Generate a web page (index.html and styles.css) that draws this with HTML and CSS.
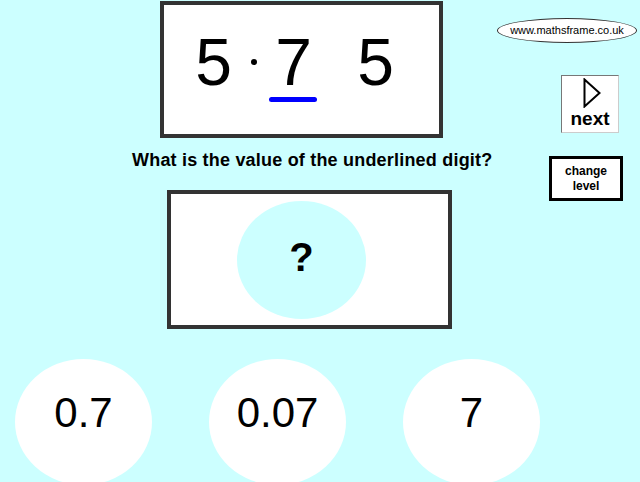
FILE: index.html
```html
<!DOCTYPE html>
<html>
<head>
<meta charset="utf-8">
<link rel="stylesheet" href="styles.css">
</head>
<body>
<div class="page">
  <div class="main">
    <div class="number-box">
      <span class="digit">5</span>
      <span class="point"><span class="dot"></span></span>
      <span class="digit underlined">7</span>
      <span class="space"></span>
      <span class="digit">5</span>
    </div>
    <div class="question">What is the value of the underlined digit?</div>
    <div class="answer-box">
      <div class="answer-bubble">?</div>
    </div>
  </div>
  <div class="side">
    <div class="site">www.mathsframe.co.uk</div>
    <div class="next">
      <svg class="next-icon" width="18" height="30" viewBox="0 0 18 30">
        <path d="M1.5 1.5 L16.5 15 L1.5 28.5 Z" fill="none" stroke="#000" stroke-width="2" stroke-linejoin="miter"/>
      </svg>
      <span class="next-label">next</span>
    </div>
    <div class="change">change<br>level</div>
  </div>
  <div class="choices">
    <div class="choice">0.7</div>
    <div class="choice">0.07</div>
    <div class="choice">7</div>
  </div>
</div>
</body>
</html>
```
FILE: styles.css
```css
html, body {
  margin: 0;
  padding: 0;
  height: 482px;
  overflow: hidden;
  background: #ccffff;
  font-family: "Liberation Sans", Arial, sans-serif;
  color: #000;
}

.page {
  display: grid;
  grid-template-columns: 497px 143px;
  grid-template-rows: auto auto;
}

.main {
  display: flex;
  flex-direction: column;
  align-items: flex-start;
}

.number-box {
  box-sizing: border-box;
  margin: 1px 0 0 160px;
  width: 283px;
  height: 137px;
  border: 4px solid #333;
  background: #fff;
  display: flex;
  align-items: flex-start;
  padding: 24px 0 0 31px;
  font-size: 66px;
  line-height: 66px;
}

.digit {
  display: block;
  width: 37px;
  text-align: center;
  position: relative;
}

.underlined::after {
  content: "";
  position: absolute;
  left: -6px;
  top: 68px;
  width: 48px;
  height: 5px;
  border-radius: 3px;
  background: #0000ff;
}

.point {
  display: block;
  width: 43px;
  height: 66px;
  position: relative;
}

.dot {
  position: absolute;
  left: 19px;
  top: 30px;
  width: 6px;
  height: 6px;
  border-radius: 50%;
  background: #000;
}

.space {
  display: block;
  width: 45px;
}

.question {
  margin: 12px 0 0 132px;
  font-size: 18px;
  letter-spacing: 0.2px;
  font-weight: bold;
  line-height: 20px;
  white-space: nowrap;
}

.answer-box {
  box-sizing: border-box;
  margin: 20px 0 0 167px;
  width: 285px;
  height: 139px;
  border: 4px solid #333;
  background: #fff;
  padding: 7px 0 0 66px;
}

.answer-bubble {
  width: 129px;
  height: 118px;
  border-radius: 50%;
  background: #ccffff;
  display: flex;
  align-items: center;
  justify-content: center;
  box-sizing: border-box;
  padding-bottom: 6px;
  font-size: 40px;
  font-weight: bold;
  line-height: 40px;
}

.side {
  display: flex;
  flex-direction: column;
  align-items: flex-start;
}

.site {
  box-sizing: border-box;
  margin-top: 18px;
  width: 140px;
  height: 25px;
  border: 1px solid #333;
  border-radius: 50%;
  background: #fff;
  font-size: 11px;
  line-height: 23px;
  text-align: center;
}

.next {
  box-sizing: border-box;
  margin: 32px 0 0 64px;
  width: 58px;
  height: 58px;
  background: #fff;
  border: 1px solid;
  border-color: #777 #ccc #ccc #777;
  display: flex;
  flex-direction: column;
  align-items: center;
}

.next-icon {
  display: block;
  margin: 2px 0 0 4px;
}

.next-label {
  font-size: 19px;
  font-weight: bold;
  line-height: 20px;
  margin-top: 1px;
}

.change {
  box-sizing: border-box;
  margin: 23px 0 0 52px;
  width: 74px;
  height: 45px;
  border: 3px solid #000;
  background: #fff;
  font-size: 12px;
  font-weight: bold;
  line-height: 15px;
  text-align: center;
  padding-top: 5px;
}

.choices {
  grid-column: 1 / 3;
  display: flex;
  gap: 57px;
  padding-left: 15px;
  margin-top: 30px;
}

.choice {
  box-sizing: border-box;
  width: 137px;
  height: 126px;
  border-radius: 50%;
  background: #fff;
  font-size: 42px;
  line-height: 42px;
  text-align: center;
  padding-top: 33px;
}
```
